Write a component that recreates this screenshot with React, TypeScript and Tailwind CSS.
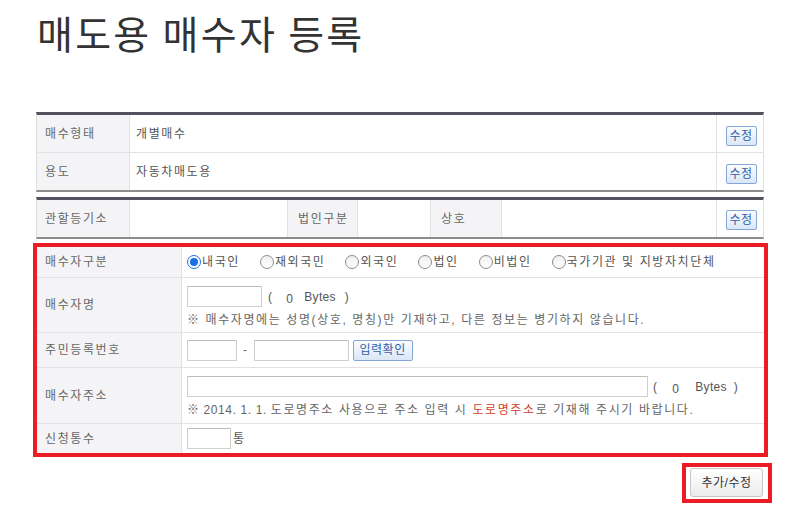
import React from "react";

const BlueBtn = ({ children, w }: { children: React.ReactNode; w: string }) => (
  <button
    className={`${w} h-[20px] flex items-center justify-center border border-[#86a6d8] rounded-[2px] bg-linear-to-b from-[#fbfdff] to-[#dae6f7] text-[12px] leading-none text-[#3262a8] tracking-[0.5px]`}
  >
    {children}
  </button>
);

const Radio = ({ checked, label }: { checked?: boolean; label: string }) => (
  <label className="flex items-center mr-[20px]">
    {checked ? (
      <span className="w-[14px] h-[14px] rounded-full border border-[#1b6fe6] bg-white flex items-center justify-center">
        <span className="w-[8px] h-[8px] rounded-full bg-[#1b6fe6]" />
      </span>
    ) : (
      <span className="w-[14px] h-[14px] rounded-full border border-[#8c8c8c] bg-linear-to-b from-[#f0f0f0] to-white" />
    )}
    <span className="ml-[1px]">{label}</span>
  </label>
);

const Input = ({ w }: { w: string }) => (
  <span className={`${w} h-[21px] block border border-[#cfcfcf] border-t-[#bdbdbd] bg-white`} />
);

const Bytes = ({ a, b, c, d }: { a: string; b: string; c: string; d: string }) => (
  <span className="flex items-center text-[#555] tracking-[0.3px]">
    <span className={a}>(</span>
    <span className={`${b} translate-y-[2px]`}>0</span>
    <span className={c}>Bytes</span>
    <span className={d}>)</span>
  </span>
);

export default function App() {
  return (
    <div className="w-[800px] h-[513px] overflow-hidden bg-white font-['Liberation_Sans','Noto_Sans_CJK_KR',sans-serif] text-[12px] tracking-[1.6px] text-[#555]">
      <h1 className="ml-[37px] pt-[12px] h-[52px] text-[39px] leading-[40px] tracking-[2.3px] text-[#333] font-['Noto_Sans_CJK_KR',sans-serif]">
        매도용 매수자 등록
      </h1>

      {/* Table 1 */}
      <div className="mt-[60px] ml-[36px] w-[728px] border-t-[3px] border-t-[#51515f] border-x border-x-[#dedede] border-b-2 border-b-[#8c8c8c]">
        <div className="grid grid-cols-[93px_586px_47px] h-[38px] border-b border-[#e2e2e2]">
          <div className="bg-[#f4f4f6] border-r border-[#e2e2e2] flex items-center pl-[8px] text-[#666]">매수형태</div>
          <div className="flex items-center pl-[6px]">개별매수</div>
          <div className="border-l border-[#e2e2e2] flex items-center justify-center pt-[4px] pl-[2px]">
            <BlueBtn w="w-[31px]">수정</BlueBtn>
          </div>
        </div>
        <div className="grid grid-cols-[93px_586px_47px] h-[37px]">
          <div className="bg-[#f4f4f6] border-r border-[#e2e2e2] flex items-center pl-[8px] text-[#666]">용도</div>
          <div className="flex items-center pl-[6px]">자동차매도용</div>
          <div className="border-l border-[#e2e2e2] flex items-center justify-center pt-[4px] pl-[2px]">
            <BlueBtn w="w-[31px]">수정</BlueBtn>
          </div>
        </div>
      </div>

      {/* Table 2 */}
      <div className="mt-[5px] ml-[36px] w-[728px] border-t-[3px] border-t-[#51515f] border-x border-x-[#dedede] border-b-2 border-b-[#8c8c8c]">
        <div className="grid grid-cols-[93px_157px_71px_72px_72px_214px_47px] h-[37px]">
          <div className="bg-[#f4f4f6] border-r border-[#e2e2e2] flex items-center pl-[8px] text-[#666]">관할등기소</div>
          <div />
          <div className="bg-[#f4f4f6] border-x border-[#e2e2e2] flex items-center pl-[10px] text-[#666]">법인구분</div>
          <div />
          <div className="bg-[#f4f4f6] border-x border-[#e2e2e2] flex items-center pl-[10px] text-[#666]">상호</div>
          <div />
          <div className="border-l border-[#e2e2e2] flex items-center justify-center pt-[2px] pl-[2px]">
            <BlueBtn w="w-[31px]">수정</BlueBtn>
          </div>
        </div>
      </div>

      {/* Red highlighted form */}
      <div className="mt-[4px] ml-[33px] w-[735px] border-4 border-[#ec1c24]">
        <div className="grid grid-cols-[145px_582px] h-[31px] border-b border-[#e2e2e2]">
          <div className="bg-[#f4f4f6] border-r border-[#e2e2e2] flex items-center pl-[8px] text-[#666]">매수자구분</div>
          <div className="flex items-center pl-[5px]">
            <Radio checked label="내국인" />
            <Radio label="재외국민" />
            <Radio label="외국인" />
            <Radio label="법인" />
            <Radio label="비법인" />
            <Radio label="국가기관 및 지방자치단체" />
          </div>
        </div>
        <div className="grid grid-cols-[145px_582px] h-[55px] border-b border-[#e2e2e2]">
          <div className="bg-[#f4f4f6] border-r border-[#e2e2e2] flex items-center pl-[8px] text-[#666]">매수자명</div>
          <div className="flex flex-col pl-[5px] pt-[8px]">
            <div className="flex items-center">
              <Input w="w-[75px]" />
              <Bytes a="ml-[6px]" b="ml-[14px]" c="ml-[11px]" d="ml-[9px]" />
            </div>
            <div className="mt-[4px] leading-[18px] text-[#666]">
              ※ 매수자명에는 성명(상호, 명칭)만 기재하고, 다른 정보는 병기하지 않습니다.
            </div>
          </div>
        </div>
        <div className="grid grid-cols-[145px_582px] h-[35px] border-b border-[#e2e2e2]">
          <div className="bg-[#f4f4f6] border-r border-[#e2e2e2] flex items-center pl-[8px] text-[#666]">주민등록번호</div>
          <div className="flex items-center pl-[5px]">
            <Input w="w-[50px]" />
            <span className="ml-[6px] mr-[5px] text-[#666]">-</span>
            <Input w="w-[95px]" />
            <span className="ml-[4px]">
              <BlueBtn w="w-[60px] h-[21px]">입력확인</BlueBtn>
            </span>
          </div>
        </div>
        <div className="grid grid-cols-[145px_582px] h-[56px] border-b border-[#e2e2e2]">
          <div className="bg-[#f4f4f6] border-r border-[#e2e2e2] flex items-center pl-[8px] text-[#666]">매수자주소</div>
          <div className="flex flex-col pl-[5px] pt-[8px]">
            <div className="flex items-center">
              <Input w="w-[461px]" />
              <Bytes a="ml-[5px]" b="ml-[15px]" c="ml-[16px]" d="ml-[7px]" />
            </div>
            <div className="mt-[4px] leading-[18px] text-[#666]">
              <span className="tracking-[0.6px]">※ 2014. 1. 1. </span>도로명주소 사용으로 주소 입력 시 <span className="text-[#d2402c]">도로명주소</span>로 기재해 주시기 바랍니다.
            </div>
          </div>
        </div>
        <div className="grid grid-cols-[145px_582px] h-[29px]">
          <div className="bg-[#f4f4f6] border-r border-[#e2e2e2] flex items-center pl-[8px] text-[#666]">신청통수</div>
          <div className="flex items-center pl-[5px]">
            <Input w="w-[44px]" />
            <span className="ml-[2px] text-[#555]">통</span>
          </div>
        </div>
      </div>

      {/* Bottom button */}
      <div className="mt-[6px] ml-[682px] w-[90px] h-[40px] border-4 border-[#ec1c24] pl-[4px] pt-[1px]">
        <button className="w-[73px] h-[29px] flex items-center justify-center border border-[#c8c8c8] rounded-[3px] bg-linear-to-b from-white to-[#ececec] text-[12px] text-[#333] tracking-[0.5px]">
          추가/수정
        </button>
      </div>
    </div>
  );
}
